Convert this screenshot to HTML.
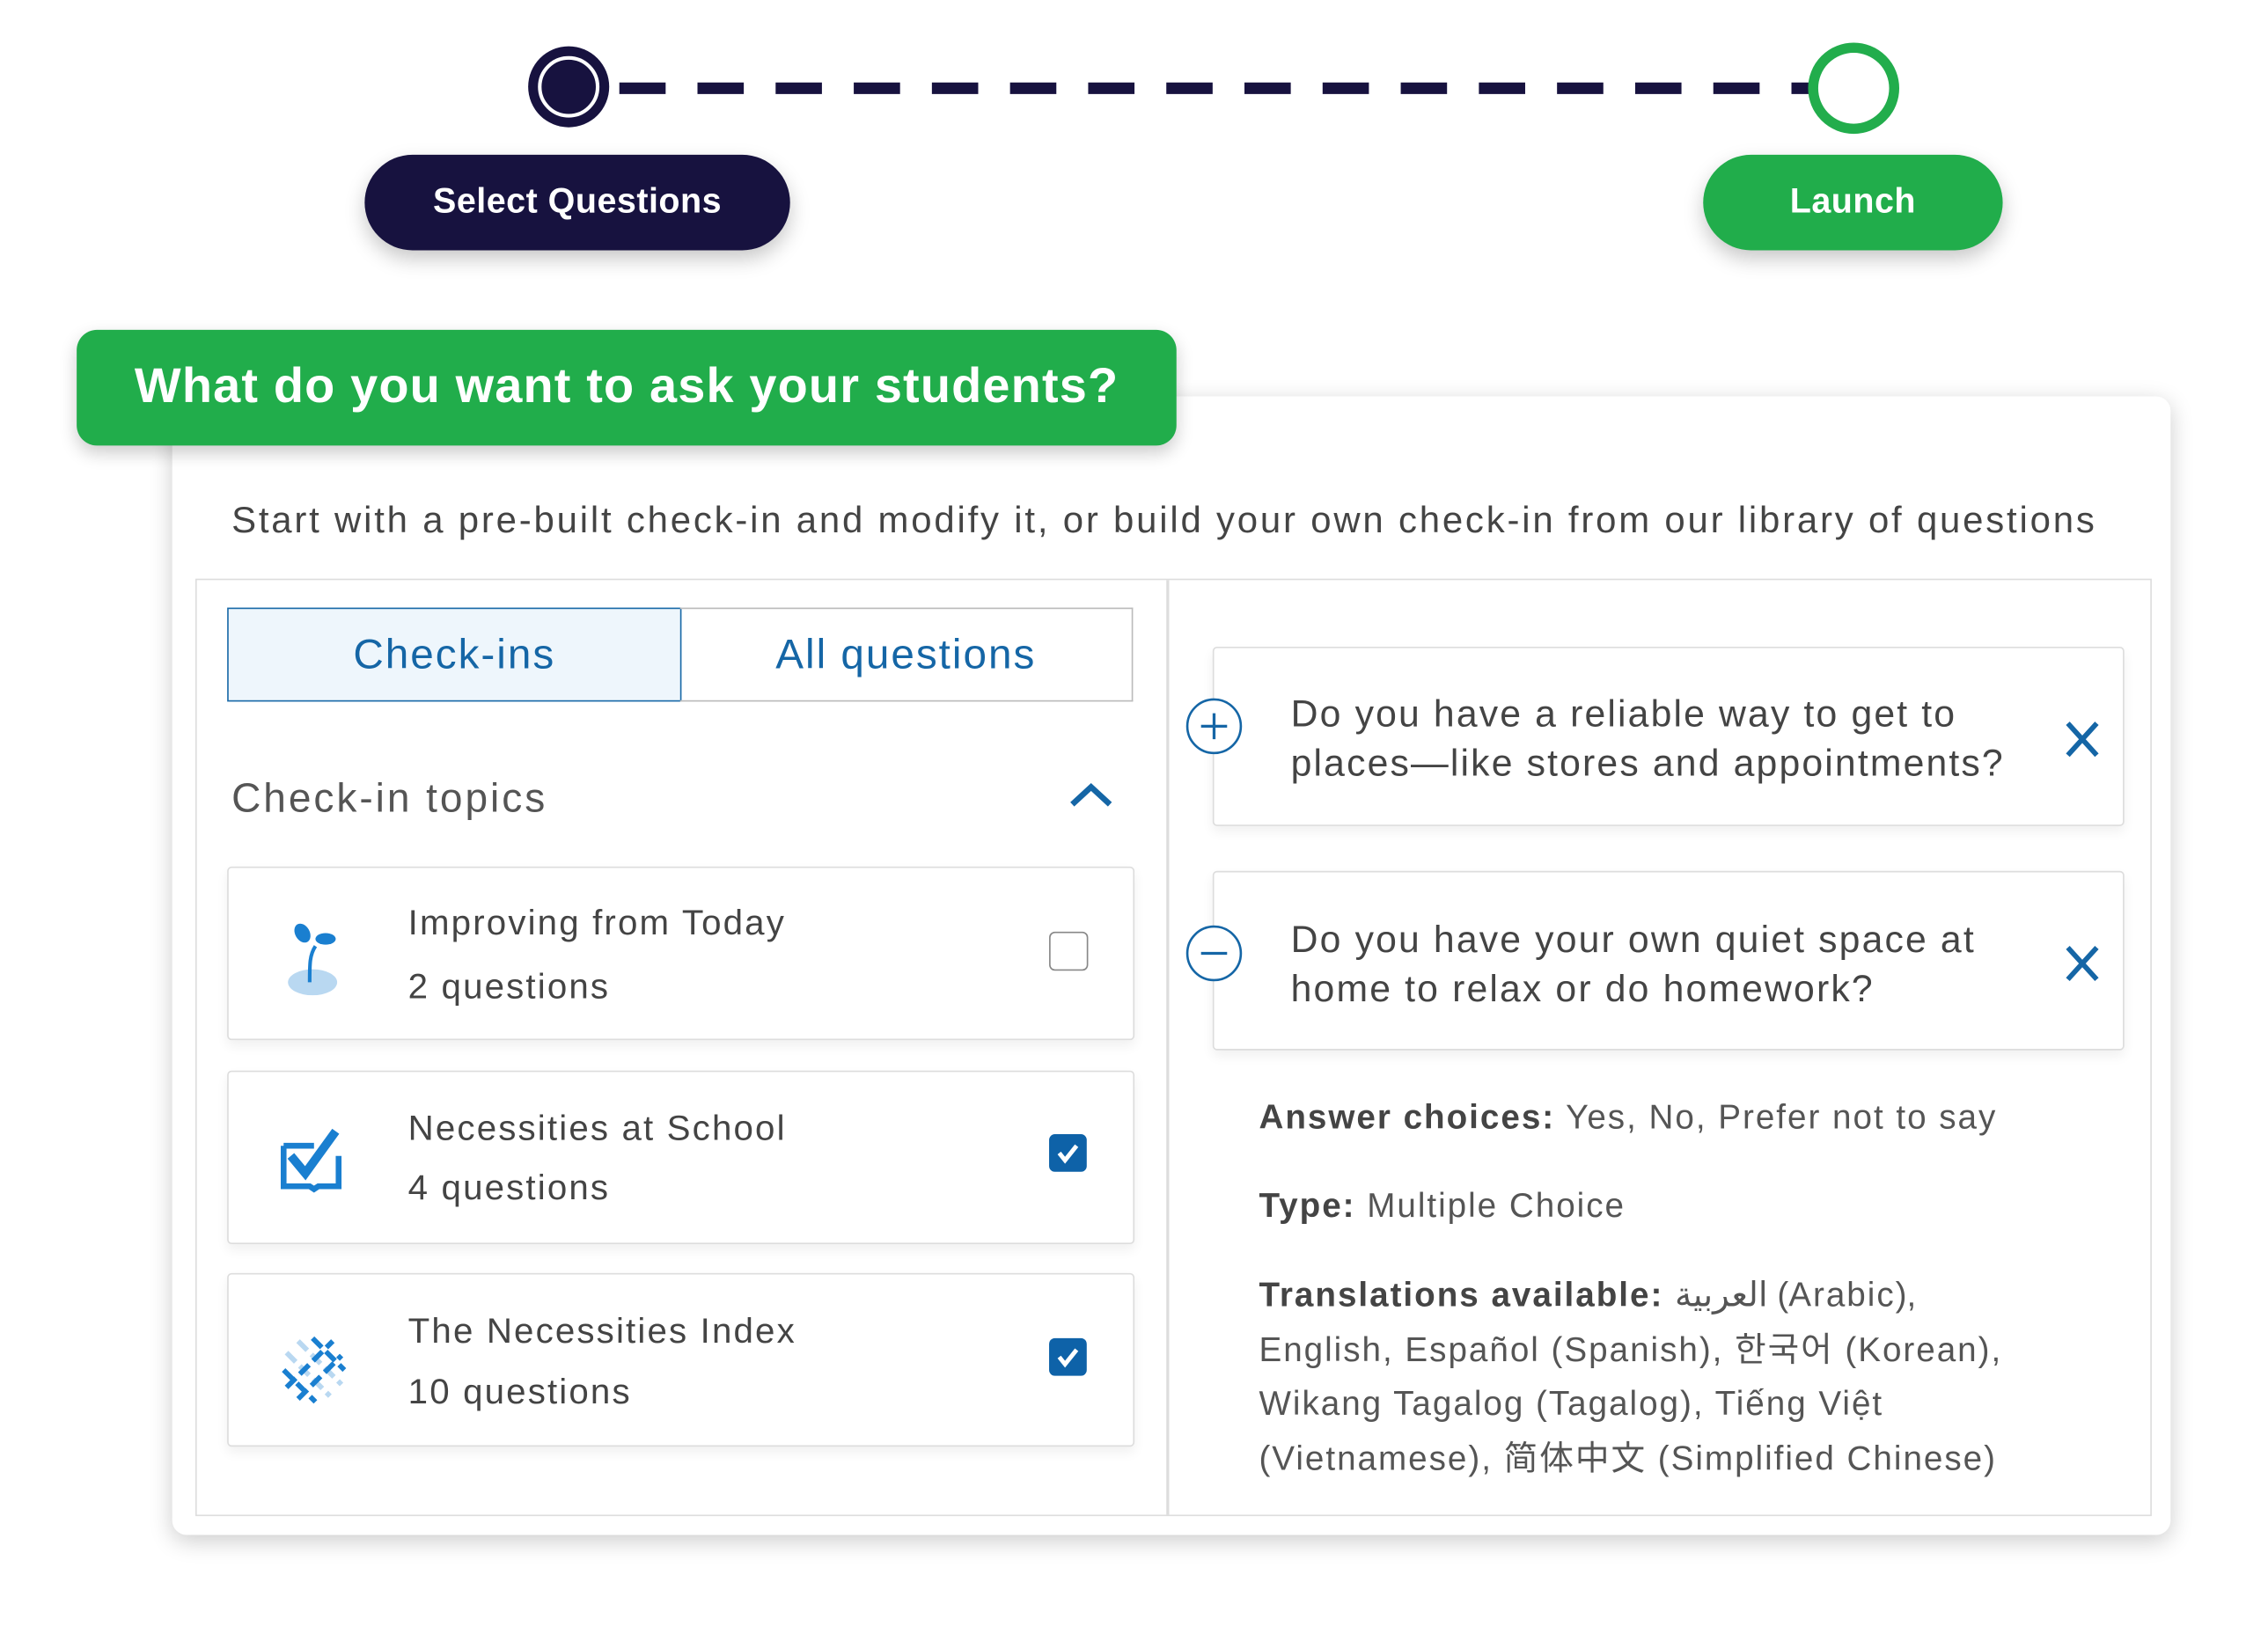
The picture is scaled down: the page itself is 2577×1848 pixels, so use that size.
<!DOCTYPE html>
<html><head><meta charset="utf-8"><style>
html,body{margin:0;padding:0;background:#fff;width:2577px;height:1847px;overflow:hidden}
#w{position:absolute;left:0;top:0;width:1568px;height:1124px;transform:scale(1.6442);transform-origin:0 0;font-family:"Liberation Sans","Noto Sans CJK KR","DejaVu Sans",sans-serif;color:#444}
.a{position:absolute}
.pill{position:absolute;border-radius:33px;color:#fff;font-weight:bold;font-size:24px;text-align:center;line-height:66px;box-shadow:0 6px 14px rgba(0,0,0,.22);letter-spacing:.3px}
.card{position:absolute;background:#fff;border:1.5px solid #ddd;border-radius:3px;box-shadow:0 4px 8px rgba(0,0,0,.06)}
.t{position:absolute;left:124px;font-size:24.5px;color:#444;letter-spacing:1.3px;white-space:nowrap}
.cb{position:absolute;left:567px;width:26px;height:26px;border-radius:4px}
.q{position:absolute;left:53px;font-size:26px;color:#444;letter-spacing:1.3px;line-height:34px;white-space:nowrap}
.info{position:absolute;left:870px;font-size:23.5px;color:#555;letter-spacing:1.2px;white-space:nowrap}
.info b{color:#444}
</style></head><body><div id="w">
<svg class="a" style="left:0;top:0" width="1560" height="110">
<line x1="428" y1="61" x2="1250" y2="61" stroke="#17123f" stroke-width="8" stroke-dasharray="32 22"/>
<circle cx="393" cy="60" r="28" fill="#17123f"/>
<circle cx="393" cy="60" r="20" fill="none" stroke="#fff" stroke-width="2.5"/>
<circle cx="1281" cy="61" r="28" fill="#fff" stroke="#22ad4c" stroke-width="7"/>
</svg>
<div class="pill" style="left:252px;top:107px;width:294px;background:#17123f">Select Questions</div>
<div class="pill" style="left:1177px;top:107px;width:207px;background:#21ad4b">Launch</div>

<div class="a" style="left:119px;top:274px;width:1381px;height:787px;background:#fff;border-radius:10px;box-shadow:0 4px 16px rgba(0,0,0,.2)"></div>
<div class="a" style="left:53px;top:228px;width:760px;height:80px;background:#21ad4b;border-radius:14px;box-shadow:0 5px 12px rgba(0,0,0,.2);color:#fff;font-weight:bold;font-size:34px;line-height:78px;text-indent:40px;letter-spacing:.7px;white-space:nowrap">What do you want to ask your students?</div>
<div class="a" style="left:160px;top:346px;font-size:25.5px;color:#444;letter-spacing:1.7px;white-space:nowrap">Start with a pre-built check-in and modify it, or build your own check-in from our library of questions</div>

<div class="a" style="left:135px;top:400px;width:1350px;height:646px;border:1.5px solid #ddd"></div>
<div class="a" style="left:806px;top:401px;width:1.5px;height:646px;background:#ddd"></div>

<div class="a" style="left:157px;top:420px;width:312px;height:63px;background:#eef6fc;border:1.5px solid #1a6aa8;color:#1566a6;font-size:29px;text-align:center;line-height:65px;letter-spacing:1.2px">Check-ins</div>
<div class="a" style="left:470px;top:420px;width:312px;height:63px;border:1.5px solid #bbb;border-left:none;color:#1566a6;font-size:29px;text-align:center;line-height:65px;letter-spacing:1.2px">All questions</div>

<div class="a" style="left:160px;top:536px;font-size:28px;color:#555;letter-spacing:1.8px">Check-in topics</div>
<svg class="a" style="left:738px;top:539px" width="32" height="22"><path d="M3 17 L16 5 L29 17" fill="none" stroke="#1566a6" stroke-width="4"/></svg>

<div class="card" style="left:157px;top:599px;width:625px;height:118px">
 <svg class="a" style="left:38px;top:36px" width="40" height="52"><ellipse cx="20" cy="43" rx="17" ry="9" fill="#b9d8f1"/><path d="M18 43 C18 30 18 24 22 18" stroke="#1a7fd0" stroke-width="2.5" fill="none"/><ellipse cx="13" cy="9" rx="5" ry="7" fill="#1a7fd0" transform="rotate(-30 13 9)"/><ellipse cx="29" cy="13" rx="7" ry="4" fill="#1a7fd0"/></svg>
 <div class="t" style="top:25px">Improving from Today</div>
 <div class="t" style="top:69px">2 questions</div>
 <div class="cb" style="top:44px;border:1.5px solid #888;width:25px;height:25px"></div>
</div>
<div class="card" style="left:157px;top:740px;width:625px;height:118px">
 <svg class="a" style="left:34px;top:36px" width="50" height="48"><path d="M4 15 H25 M4 15 V43 H22 L25 45 L28 43 H42 V22" fill="none" stroke="#1a7fd0" stroke-width="4"/><path d="M9 22 L19 34 L40 5" fill="none" stroke="#1a7fd0" stroke-width="6"/></svg>
 <div class="t" style="top:26px">Necessities at School</div>
 <div class="t" style="top:67px">4 questions</div>
 <div class="cb" style="top:43px;background:#0e62a8"><svg width="26" height="26"><path d="M7 13 L11 18 L19 8" fill="none" stroke="#fff" stroke-width="3"/></svg></div>
</div>
<div class="card" style="left:157px;top:880px;width:625px;height:118px">
 <svg class="a" style="left:34px;top:40px" width="50" height="52"><g stroke-width="3.5" fill="none" stroke-dasharray="9 4"><path d="M6 14 L36 44 M14 6 L44 36" stroke="#b9d8f1"/><path d="M6 38 L38 6 M14 46 L44 16" stroke="#1a7fd0"/><path d="M4 26 L26 48 M24 4 L46 26" stroke="#1a7fd0"/></g></svg>
 <div class="t" style="top:26px">The Necessities Index</div>
 <div class="t" style="top:68px">10 questions</div>
 <div class="cb" style="top:44px;background:#0e62a8"><svg width="26" height="26"><path d="M7 13 L11 18 L19 8" fill="none" stroke="#fff" stroke-width="3"/></svg></div>
</div>

<div class="card" style="left:838px;top:447px;width:628px;height:122px">
 <div class="q" style="top:28px">Do you have a reliable way to get to<br>places—like stores and appointments?</div>
 <svg class="a" style="left:588px;top:50px" width="24" height="26"><path d="M2 2 L22 24 M22 2 L2 24" stroke="#1566a6" stroke-width="3.5"/></svg>
</div>
<div class="card" style="left:838px;top:602px;width:628px;height:122px">
 <div class="q" style="top:29px">Do you have your own quiet space at<br>home to relax or do homework?</div>
 <svg class="a" style="left:588px;top:50px" width="24" height="26"><path d="M2 2 L22 24 M22 2 L2 24" stroke="#1566a6" stroke-width="3.5"/></svg>
</div>
<svg class="a" style="left:818px;top:481px" width="42" height="200"><circle cx="21" cy="21" r="18.5" fill="#fff" stroke="#1566a6" stroke-width="1.6"/><path d="M21 12 V30 M12 21 H30" stroke="#1566a6" stroke-width="2"/><circle cx="21" cy="178" r="18.5" fill="#fff" stroke="#1566a6" stroke-width="1.6"/><path d="M12 178 H30" stroke="#1566a6" stroke-width="2"/></svg>

<div class="info" style="top:759px"><b>Answer choices:</b> Yes, No, Prefer not to say</div>
<div class="info" style="top:820px"><b>Type:</b> Multiple Choice</div>
<div class="info" style="top:877px;line-height:37.5px"><b>Translations available:</b> العربية (Arabic),<br>English, Español (Spanish), 한국어 (Korean),<br>Wikang Tagalog (Tagalog), Tiếng Việt<br>(Vietnamese), 简体中文 (Simplified Chinese)</div>
</div></body></html>
